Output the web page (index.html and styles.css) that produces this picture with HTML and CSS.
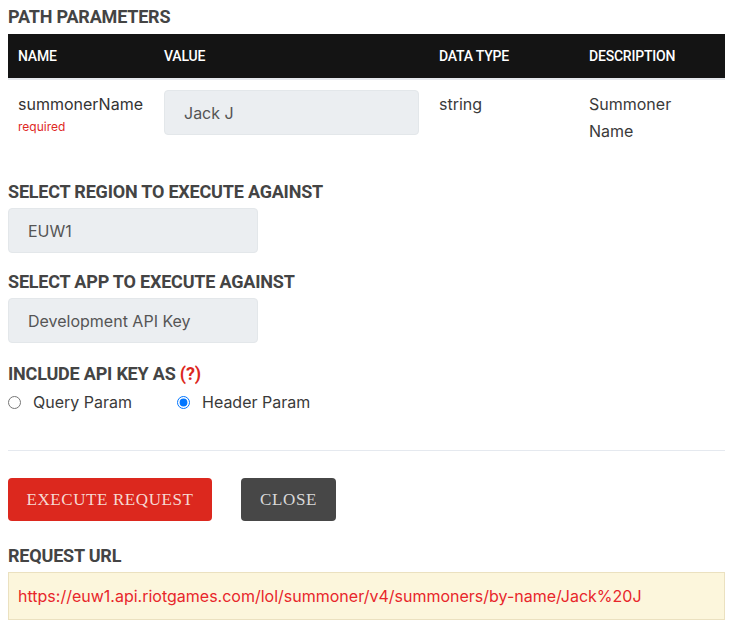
FILE: index.html
```html
<!DOCTYPE html>
<html>
<head>
<meta charset="utf-8">
<link rel="stylesheet" href="styles.css">
</head>
<body>
<div class="panel">
  <h3 class="heading">Path Parameters</h3>
  <div class="params">
    <div class="params-head">
      <div class="cell">Name</div>
      <div class="cell">Value</div>
      <div class="cell">Data Type</div>
      <div class="cell">Description</div>
    </div>
    <div class="params-row">
      <div class="cell name-cell">
        <div class="param-name">summonerName</div>
        <div class="required">required</div>
      </div>
      <div class="cell"><div class="field field-value">Jack J</div></div>
      <div class="cell text">string</div>
      <div class="cell text">Summoner Name</div>
    </div>
  </div>

  <h3 class="heading h-region">Select region to execute against</h3>
  <div class="field field-select">EUW1</div>

  <h3 class="heading h-app">Select app to execute against</h3>
  <div class="field field-select">Development API Key</div>

  <h3 class="heading h-key">Include API key as <span class="help">(?)</span></h3>
  <div class="radios">
    <label class="radio"><input type="radio" name="keyas"> Query Param</label>
    <label class="radio"><input type="radio" name="keyas" checked> Header Param</label>
  </div>

  <hr class="divider">

  <div class="actions">
    <button class="btn btn-execute">Execute Request</button>
    <button class="btn btn-close">Close</button>
  </div>

  <h3 class="heading h-url">Request URL</h3>
  <div class="url-box">https://euw1.api.riotgames.com/lol/summoner/v4/summoners/by-name/Jack%20J</div>
</div>
</body>
</html>
```
FILE: styles.css
```css
* { box-sizing: border-box; }
html, body { margin: 0; padding: 0; background: #fff; }
body {
  font-family: Inter, "Noto Sans", sans-serif;
  font-size: 16px;
  color: #3a3a3a;
}
.panel {
  padding: 7px 9px 8px 8px;
}
.heading {
  margin: 0;
  font-family: Roboto, "Liberation Sans", sans-serif;
  font-weight: 700;
  font-size: 18px;
  line-height: 20px;
  text-transform: uppercase;
  color: #444;
  letter-spacing: -0.2px;
}
.params {
  margin-top: 7px;
}
.params-head,
.params-row {
  display: grid;
  grid-template-columns: 146px 275px 150px 1fr;
}
.params-head {
  background: #141414;
  height: 44px;
  align-items: center;
  border-bottom: 2px solid #e6e9ed;
  box-sizing: content-box;
  font-family: Roboto, "Liberation Sans", sans-serif;
  font-weight: 500;
  font-size: 14px;
  color: #fff;
  text-transform: uppercase;
  letter-spacing: -0.2px;
}
.cell { padding: 0 10px; }
.params-row {
  padding-top: 10px;
  padding-bottom: 37px;
  align-items: start;
}
.params-row .text {
  line-height: 27px;
  padding-top: 1px;
  color: #3a3a3a;
}
.param-name {
  line-height: 24px;
  padding-top: 2px;
  color: #333;
}
.required {
  font-size: 12px;
  line-height: 14px;
  color: #e0281f;
  padding-top: 4px;
}
.field {
  background: #ebeef1;
  border: 1px solid #e3e7ea;
  border-radius: 4px;
  height: 45px;
  display: flex;
  align-items: center;
  padding: 0 19px;
  color: #555;
}
.field-value { width: 255px; }
.field-select { width: 250px; }
.h-region { margin-top: 0; }
.h-region + .field,
.h-app + .field { margin-top: 6px; }
.h-app { margin-top: 19px; }
.h-key { margin-top: 21px; }
.help { color: #dc281e; }
.radios {
  display: flex;
  margin-top: 8px;
}
.radio {
  display: flex;
  align-items: center;
  gap: 12px;
  color: #3a3a3a;
  line-height: 20px;
}
.radio:first-child { width: 169px; }
.radio input {
  margin: 0;
  width: 13px;
  height: 13px;
}
.divider {
  border: 0;
  border-top: 1px solid #e5e9ef;
  margin: 38px 0 0;
}
.actions {
  display: flex;
  gap: 29px;
  margin-top: 27px;
}
.btn {
  height: 43px;
  border: 0;
  border-radius: 4px;
  font-family: "Liberation Serif", "DejaVu Serif", serif;
  font-size: 17px;
  text-transform: uppercase;
  letter-spacing: 0.6px;
  white-space: nowrap;
  padding: 0;
  text-align: center;
}
.btn-execute {
  background: #dc281e;
  color: #f6d9d2;
  width: 204px;
}
.btn-close {
  background: #474747;
  color: #d9d9d9;
  width: 95px;
}
.h-url { margin-top: 25px; }
.url-box {
  margin-top: 6px;
  background: #fcf6dc;
  border: 1px solid #ebe1c0;
  height: 48px;
  display: flex;
  align-items: center;
  padding: 0 9px;
  color: #e8262b;
}
```
